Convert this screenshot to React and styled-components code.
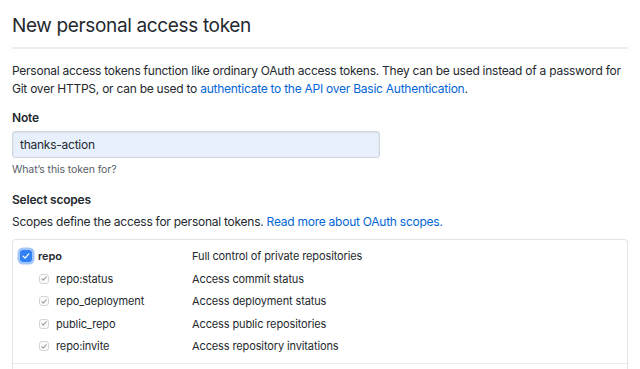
import React from "react";
import styled, { createGlobalStyle } from "styled-components";

const Global = createGlobalStyle`
  html, body { margin: 0; padding: 0; background: #fff; }
  body { font-family: Inter, "Noto Sans", sans-serif; color: #24292e; }
  * { box-sizing: border-box; }
`;

const Page = styled.div`
  padding: 12px 12px 0 12px;
  width: 640px;
  height: 369px;
  overflow: hidden;
`;

const Heading = styled.h1`
  margin: 0;
  font-size: 19px;
  font-weight: 400;
  line-height: 26px;
  padding-bottom: 8px;
  border-bottom: 2px solid #eaecef;
  letter-spacing: -0.35px;
  padding-top: 1px;
`;

const Para = styled.p`
  margin: ${(p) => p.$top}px 0 0 0;
  font-size: 12px;
  letter-spacing: -0.25px;
  line-height: 18px;
`;

const Link = styled.a`
  color: #0366d6;
  text-decoration: none;
`;

const Label = styled.div`
  margin-top: ${(p) => p.$top}px;
  font-size: 12px;
  letter-spacing: -0.2px;
  font-weight: 600;
  line-height: 18px;
`;

const Input = styled.div`
  margin-top: 4px;
  width: 368px;
  height: 27px;
  background: #e8f0fe;
  border: 1px solid #d1d5da;
  border-radius: 3px;
  padding: 0 7px;
  display: flex;
  align-items: center;
  font-size: 12px;
  letter-spacing: -0.25px;
  box-shadow: inset 0 1px 2px rgba(27, 31, 35, 0.075);
`;

const Hint = styled.div`
  margin-top: 4px;
  font-size: 10.5px;
  letter-spacing: -0.1px;
  line-height: 16px;
  color: #586069;
`;

const Box = styled.div`
  margin-top: 8px;
  border: 1px solid #e1e4e8;
  border-radius: 4px;
  border-bottom: none;
  height: 200px;
`;

const Group = styled.div`
  padding: 5px 7px 5px 7px;
  border-bottom: 1px solid #eaecef;
`;

const Row = styled.div`
  display: grid;
  grid-template-columns: ${(p) => (p.$sub ? "18px 18px 136px 1fr" : "18px 154px 1fr")};
  align-items: center;
  height: 22.5px;
  font-size: 11px;
  letter-spacing: -0.12px;
`;

const Name = styled.span`
  font-weight: ${(p) => (p.$bold ? 600 : 400)};
`;

const Desc = styled.span`
  color: #24292e;
`;

const Check = styled.span`
  width: ${(p) => (p.$main ? 12 : 10)}px;
  height: ${(p) => (p.$main ? 12 : 10)}px;
  margin-left: ${(p) => (p.$main ? 0 : 1)}px;
  border-radius: 3px;
  display: inline-flex;
  align-items: center;
  justify-content: center;
  background: ${(p) => (p.$main ? "#2f7ff5" : "#fbfbfb")};
  border: 1px solid ${(p) => (p.$main ? "#2f7ff5" : "#d4d4d4")};
  box-shadow: ${(p) => (p.$main ? "0 0 0 2.5px rgba(47,127,245,0.45)" : "none")};
`;

const Spacer = styled.span``;

function Tick({ color, size }) {
  return (
    <svg width={size} height={size} viewBox="0 0 10 10">
      <path d="M2.2 5.3 L4.1 7.1 L7.8 2.9" fill="none" stroke={color} strokeWidth="1.3" strokeLinecap="round" strokeLinejoin="round" />
    </svg>
  );
}

const subs = [
  ["repo:status", "Access commit status"],
  ["repo_deployment", "Access deployment status"],
  ["public_repo", "Access public repositories"],
  ["repo:invite", "Access repository invitations"],
];

export default function App() {
  return (
    <>
      <Global />
      <Page>
        <Heading>New personal access token</Heading>
        <Para $top={13}>
          Personal access tokens function like ordinary OAuth access tokens. They can be used instead of a password for
          Git over HTTPS, or can be used to <Link>authenticate to the API over Basic Authentication</Link>.
        </Para>
        <Label $top={11}>Note</Label>
        <Input>thanks-action</Input>
        <Hint>What’s this token for?</Hint>
        <Label $top={13}>Select scopes</Label>
        <Para $top={4}>
          Scopes define the access for personal tokens. <Link>Read more about OAuth scopes.</Link>
        </Para>
        <Box>
          <Group>
            <Row>
              <Check $main>
                <Tick color="#fff" size={10} />
              </Check>
              <Name $bold>repo</Name>
              <Desc>Full control of private repositories</Desc>
            </Row>
            {subs.map(([n, d]) => (
              <Row $sub key={n}>
                <Spacer />
                <Check>
                  <Tick color="#9a9a9a" size={9} />
                </Check>
                <Name>{n}</Name>
                <Desc>{d}</Desc>
              </Row>
            ))}
          </Group>
        </Box>
      </Page>
    </>
  );
}
